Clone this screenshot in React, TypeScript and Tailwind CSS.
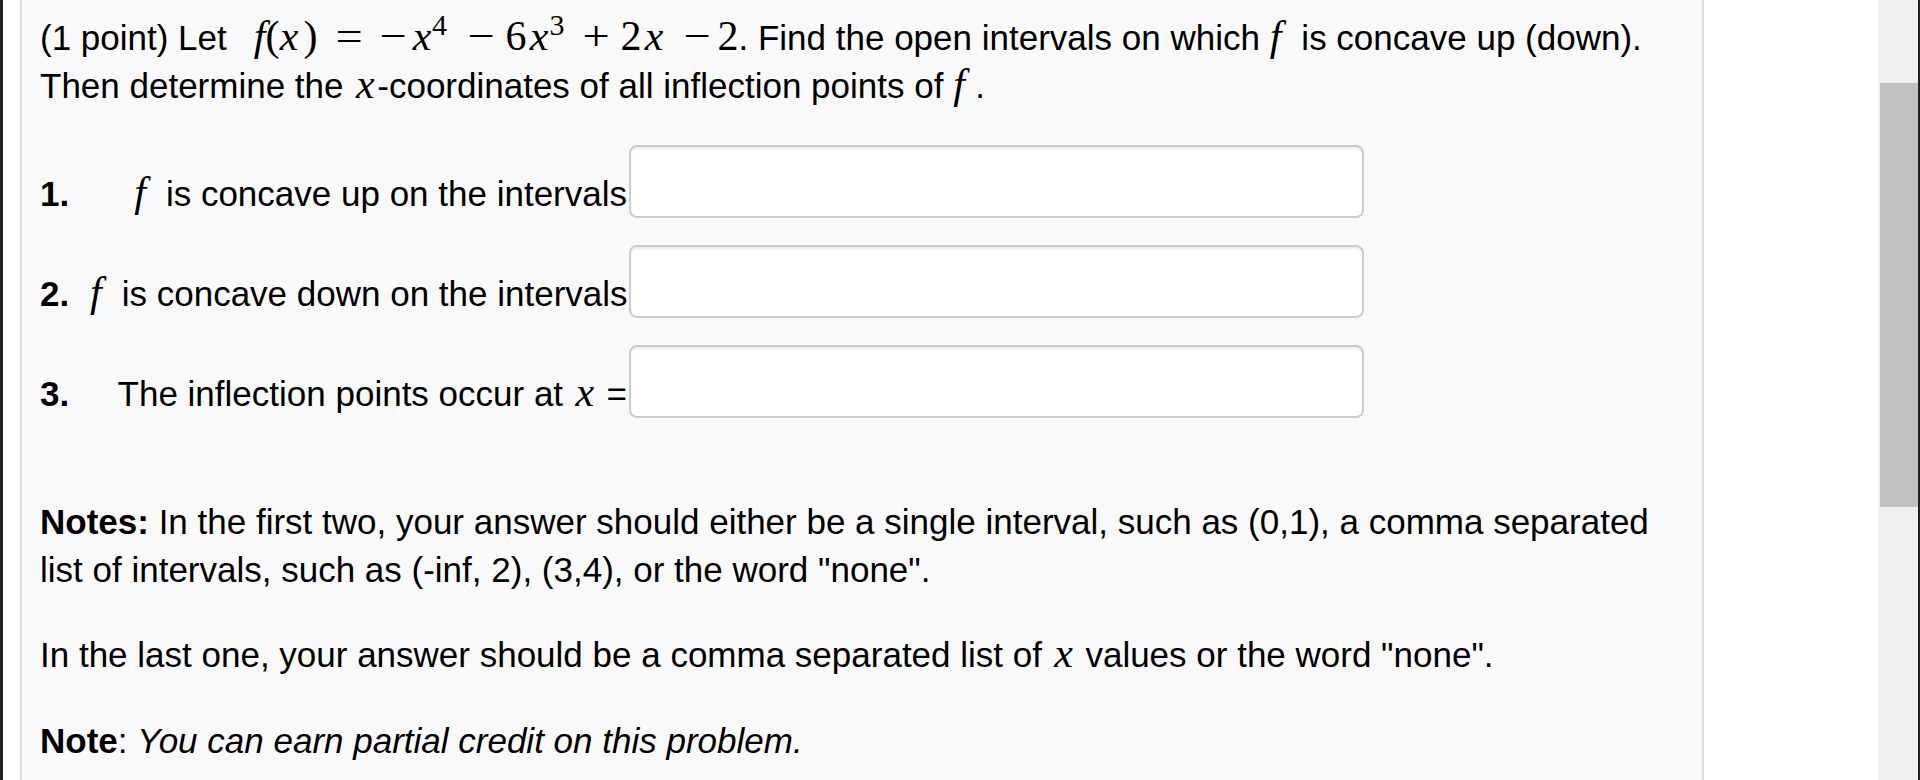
import type { ReactNode } from "react";

const mathCls = "font-['Liberation_Serif','Times_New_Roman',serif] text-[42px] leading-none";

function Math({ children }: { children: ReactNode }) {
  return <span className={mathCls}>{children}</span>;
}

// f(x) = -x^4 - 6x^3 + 2x - 2, each glyph boxed so it lands where the TeX rendering put it
type Glyph = { c: string; cls: string; it?: boolean; sup?: boolean };

const formula: Glyph[] = [
  { c: "f", cls: "ml-[5px] w-[24px] text-right", it: true },
  { c: "(", cls: "w-[9px] text-center" },
  { c: "x", cls: "ml-[3.5px] w-[22px] text-center", it: true },
  { c: ")", cls: "ml-[3.5px] w-[12px] text-center" },
  { c: "=", cls: "ml-[19.5px] w-[28px] scale-x-[1.15] text-center" },
  { c: "−", cls: "ml-[16px] w-[28px] scale-x-[1.15] text-center" },
  { c: "x", cls: "ml-[4px] w-[22px] text-center", it: true },
  { c: "4", cls: "-ml-[1px] w-[14px] text-center", sup: true },
  { c: "−", cls: "ml-[21px] w-[28px] scale-x-[1.15] text-center" },
  { c: "6", cls: "ml-[10.5px] w-[21px] text-center" },
  { c: "x", cls: "ml-[1.5px] w-[22px] text-center", it: true },
  { c: "3", cls: "-ml-[0.5px] w-[14px] text-center", sup: true },
  { c: "+", cls: "ml-[18.5px] w-[28px] scale-x-[1.15] text-center" },
  { c: "2", cls: "ml-[10.5px] w-[21px] text-center" },
  { c: "x", cls: "ml-[1.5px] w-[22px] text-center", it: true },
  { c: "−", cls: "ml-[18px] w-[28px] scale-x-[1.15] text-center" },
  { c: "2", cls: "ml-[6.5px] w-[21px] text-center" },
];

function Formula() {
  return (
    <span className={mathCls}>
      {formula.map((g, i) => (
        <span
          key={i}
          className={`inline-block ${g.cls} ${g.it ? "italic" : ""} ${
            g.sup ? "align-[0.5em] text-[30px] leading-[0]" : ""
          }`}
        >
          {g.c}
        </span>
      ))}
    </span>
  );
}

function F() {
  return (
    <Math>
      <span className="inline-block w-[22px] text-left italic">f</span>
    </Math>
  );
}

function X() {
  return (
    <Math>
      <span className="inline-block w-[0.572em] text-center italic">x</span>
    </Math>
  );
}

type Row = { num: string; label: ReactNode };

const rows: Row[] = [
  {
    num: "1.",
    label: (
      <>
        <F /> is concave up on the intervals
      </>
    ),
  },
  {
    num: "2.",
    label: (
      <>
        <F /> is concave down on the intervals
      </>
    ),
  },
  {
    num: "3.",
    label: (
      <>
        The inflection points occur at <X /> =
      </>
    ),
  },
];

export default function App() {
  return (
    <div className="flex h-[780px] w-[1920px] overflow-hidden bg-white">
      <div className="w-[3px] bg-[#222222]" />

      <div className="flex-1 bg-white pl-[17px]">
        <div className="h-full w-[1684px] border-x-2 border-[#dddddd] bg-[#f9f9f9] pl-[18px] pt-[14px] font-['Liberation_Sans',Arial,sans-serif] text-[35px] leading-[48px] text-black">
          <p className="whitespace-nowrap">
            (1 point) Let <Formula />. Find the open intervals on which <F /> is concave up (down).
            <br />
            Then determine the <X />-coordinates of all inflection points of <F />.
          </p>

          <div className="mt-[35px] flex flex-col gap-[27px]">
            {rows.map((row) => (
              <div key={row.num} className="flex items-end">
                <span className="w-[50px] font-bold">{row.num}</span>
                <span className="w-[537px] whitespace-nowrap text-right">{row.label}</span>
                <div className="ml-[2px] h-[73px] w-[735px] rounded-[8px] border-2 border-[#cccccc] bg-white shadow-[inset_0_2px_2px_rgba(0,0,0,0.075)]" />
              </div>
            ))}
          </div>

          <p className="mt-[80px] whitespace-nowrap">
            <b>Notes:</b> In the first two, your answer should either be a single interval, such as (0,1), a comma
            separated
            <br />
            list of intervals, such as (-inf, 2), (3,4), or the word "none".
          </p>

          <p className="mt-[37px] whitespace-nowrap">
            In the last one, your answer should be a comma separated list of <X /> values or the word "none".
          </p>

          <p className="mt-[38px] whitespace-nowrap">
            <b>Note</b>: <i>You can earn partial credit on this problem.</i>
          </p>
        </div>
      </div>

      <div className="w-[40px] bg-[#f0f0f0] pl-[2px]">
        <div className="mt-[83px] h-[424px] bg-[#c1c1c1]" />
      </div>

      <div className="w-[2px] bg-[#222222]" />
    </div>
  );
}
